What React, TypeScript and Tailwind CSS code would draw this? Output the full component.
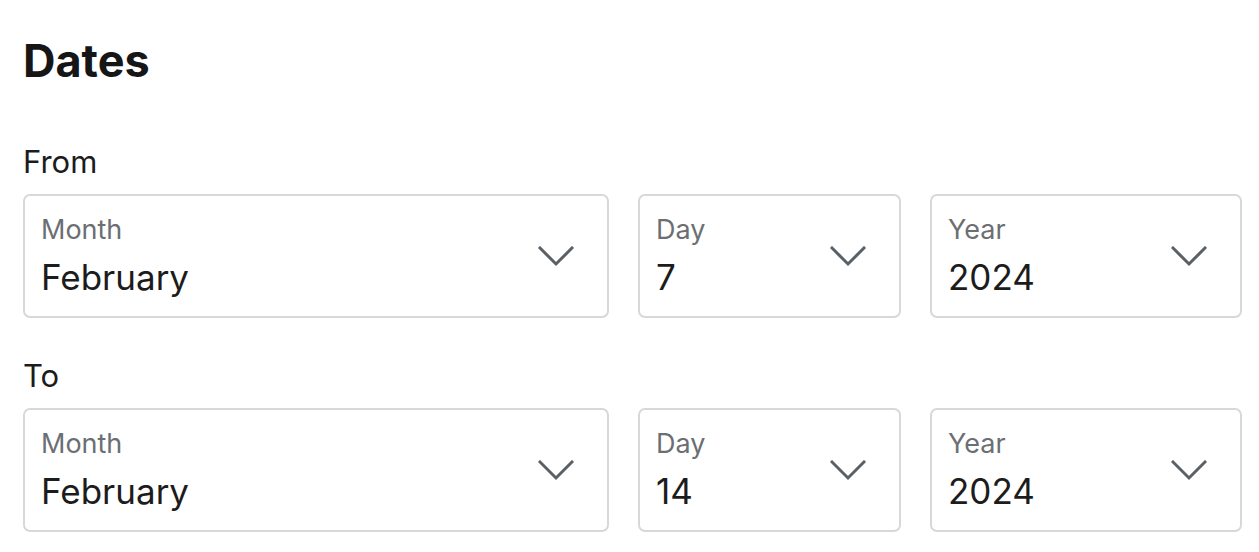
import React from 'react';

type Field = { label: string; value: string; width: string };

const Chevron = () => (
  <svg width="36" height="21" viewBox="0 0 36 21" fill="none" className="shrink-0">
    <polyline
      points="2,2 18,18 34,2"
      stroke="#596066"
      strokeWidth="3"
      strokeLinecap="square"
      strokeLinejoin="miter"
    />
  </svg>
);

const SelectBox = ({ label, value, width }: Field) => (
  <div
    className={`${width} h-[124px] shrink-0 rounded-[7px] border-2 border-[#d7d8d9] bg-white flex items-center justify-between pl-[16px] pr-[33px]`}
  >
    <div className="flex flex-col -mt-[2px]">
      <span className="text-[27px] leading-[32px] text-[#6b6f73]">{label}</span>
      <span className="mt-[11px] text-[35px] leading-[40px] text-[#1c1c1c]">{value}</span>
    </div>
    <Chevron />
  </div>
);

const DateRow = ({ title, day, className }: { title: string; day: string; className?: string }) => (
  <div className={className}>
    <div className="text-[31px] leading-[36px] text-[#1c1c1c]">{title}</div>
    <div className="mt-[14px] flex gap-[29px]">
      <SelectBox label="Month" value="February" width="w-[586px]" />
      <SelectBox label="Day" value={day} width="w-[263px]" />
      <SelectBox label="Year" value="2024" width="w-[312px]" />
    </div>
  </div>
);

export default function App() {
  return (
    <div
      className="min-h-screen bg-white pl-[23px] pt-[34px]"
      style={{ fontFamily: 'Inter, "Noto Sans", sans-serif' }}
    >
      <h1 className="text-[45px] leading-[53px] font-bold text-[#161616]">Dates</h1>
      <DateRow title="From" day="7" className="mt-[57px]" />
      <DateRow title="To" day="14" className="mt-[40px]" />
    </div>
  );
}
